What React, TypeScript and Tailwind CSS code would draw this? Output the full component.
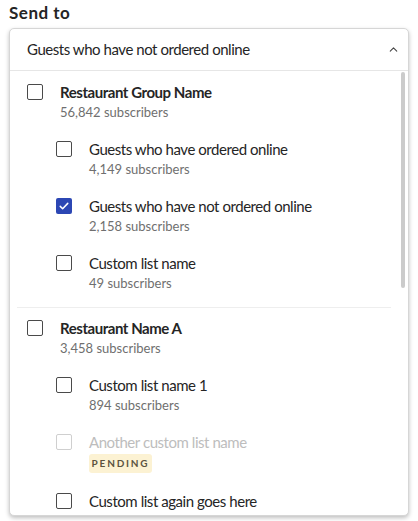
import { ChevronUp } from "lucide-react";

type Item = {
  name: string;
  count?: string;
  checked?: boolean;
  pending?: boolean;
};

type Group = {
  name: string;
  count: string;
  items: Item[];
};

const GROUPS: Group[] = [
  {
    name: "Restaurant Group Name",
    count: "56,842 subscribers",
    items: [
      { name: "Guests who have ordered online", count: "4,149 subscribers" },
      { name: "Guests who have not ordered online", count: "2,158 subscribers", checked: true },
      { name: "Custom list name", count: "49 subscribers" },
    ],
  },
  {
    name: "Restaurant Name A",
    count: "3,458 subscribers",
    items: [
      { name: "Custom list name 1", count: "894 subscribers" },
      { name: "Another custom list name", pending: true },
      { name: "Custom list again goes here", count: "2,158 subscribers" },
    ],
  },
];

function Checkbox({ checked, disabled }: { checked?: boolean; disabled?: boolean }) {
  if (checked) {
    return (
      <span className="mt-[3px] flex h-4 w-4 flex-shrink-0 items-center justify-center rounded-[2px] bg-[#2c47b4]">
        <svg viewBox="0 0 16 16" className="h-3 w-3" fill="none" stroke="white" strokeWidth="2" strokeLinecap="round" strokeLinejoin="round">
          <path d="M3 8.5l3.2 3.2L13 4.5" />
        </svg>
      </span>
    );
  }
  return (
    <span
      className={`mt-[3px] h-4 w-4 flex-shrink-0 rounded-[2px] border-[1.5px] bg-white ${
        disabled ? "border-[#cfcfcf]" : "border-[#4a4a4a]"
      }`}
    />
  );
}

function Row({ item, bold }: { item: Item; bold?: boolean }) {
  return (
    <div className="flex gap-[17px]">
      <Checkbox checked={item.checked} disabled={item.pending} />
      <div className="flex flex-col">
        <span
          className={`text-[15px] leading-[22px] tracking-[-0.03em] ${
            bold ? "font-bold text-[#252525]" : item.pending ? "text-[#bdbdbd]" : "text-[#252525]"
          }`}
        >
          {item.name}
        </span>
        {item.pending ? (
          <span className="mt-[1px] flex h-[19px] w-[63px] items-center justify-center rounded-[3px] bg-[#fcf2d3] text-[10px] font-bold tracking-[0.18em] text-[#5b5340]">
            PENDING
          </span>
        ) : (
          <span className="text-[13px] leading-[18px] text-[#6f6f6f]">{item.count}</span>
        )}
      </div>
    </div>
  );
}

export default function App() {
  return (
    <div className="h-[521px] overflow-hidden bg-white px-[9px] pt-[3px]" style={{ fontFamily: "Lato, 'Noto Sans', sans-serif" }}>
      <div className="text-[17px] font-bold leading-5 tracking-[0.03em] text-[#252525]">Send to</div>

      <div className="relative z-10 mt-[5px] h-[488px] overflow-hidden rounded-[5px] border border-[#d6d6d6] bg-white shadow-[0_2px_4px_rgba(0,0,0,0.25)]">
        <div className="flex h-[42px] items-center justify-between border-b border-[#e6e6e6] pl-[17px] pr-[8px]">
          <span className="text-[15px] tracking-[-0.03em] text-[#252525]">Guests who have not ordered online</span>
          <ChevronUp className="h-[13px] w-[13px] text-[#444]" strokeWidth={2} />
        </div>

        <div className="pt-[10px]">
          {GROUPS.map((g, gi) => (
            <div key={g.name}>
              {gi > 0 && <div className="mx-[7px] mb-[9px] mt-[15px] h-px w-[374px] bg-[#eeeeee]" />}
              <div className="flex flex-col gap-[17px] pl-[17px]">
                <Row item={{ name: g.name, count: g.count }} bold />
                <div className="flex flex-col gap-[17px] pl-[29px]">
                  {g.items.map((it) => (
                    <Row key={it.name} item={it} />
                  ))}
                </div>
              </div>
            </div>
          ))}
        </div>

        <div className="absolute right-[3px] top-[43px] h-[216px] w-[4px] rounded-full bg-[#cbcbcb]" />
      </div>

      <div className="mt-[2px] pl-[80px] text-[15px] leading-5 text-[#333]">
        subscribers for your restaurant list groups
      </div>
    </div>
  );
}
